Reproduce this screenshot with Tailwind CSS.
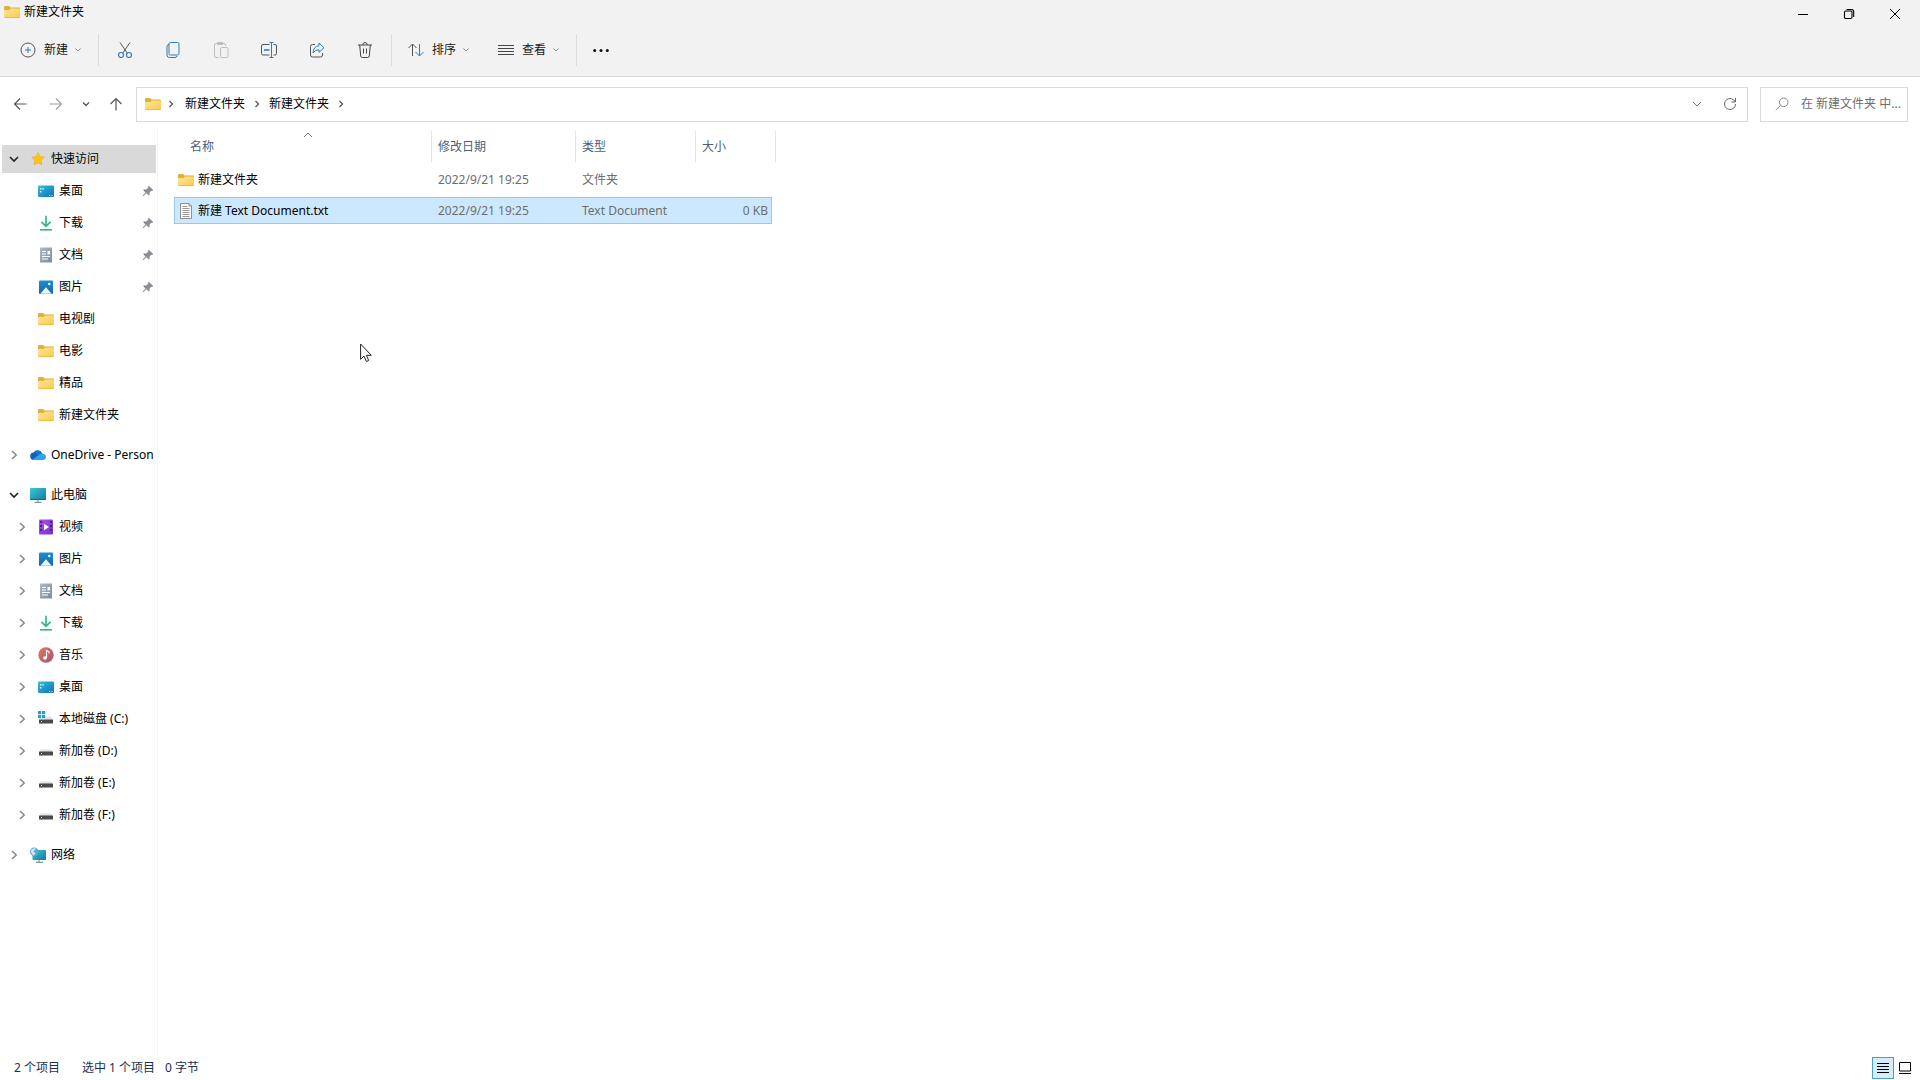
<!DOCTYPE html>
<html lang="zh-CN">
<head>
    <meta charset="UTF-8">
    <meta name="viewport" content="width=device-width, initial-scale=1.0">
    <title>新建文件夹</title>
    <script src="https://cdn.jsdelivr.net/npm/@tailwindcss/browser@4"></script>
</head>
<body class="relative flex h-screen flex-col overflow-hidden bg-white font-['Noto_Sans','Noto_Sans_CJK_SC',sans-serif] text-xs text-black">
    <!-- Icon sprite -->
    <svg class="absolute size-0" aria-hidden="true">
        <defs>
            <linearGradient id="gFolder" x1="0" y1="0" x2="1" y2="1"><stop offset="0" stop-color="#ffe596"/><stop offset="1" stop-color="#f5cb50"/></linearGradient>
            <linearGradient id="gDesk" x1="0" y1="0" x2="1" y2="1"><stop offset="0" stop-color="#2fc0de"/><stop offset="1" stop-color="#1471b0"/></linearGradient>
            <linearGradient id="gTeal" x1="0" y1="0" x2="1" y2="1"><stop offset="0" stop-color="#38cbd6"/><stop offset="1" stop-color="#16789f"/></linearGradient>
            <linearGradient id="gDoc" x1="0" y1="0" x2="1" y2="1"><stop offset="0" stop-color="#aebac8"/><stop offset="1" stop-color="#7d8a9e"/></linearGradient>
            <linearGradient id="gPic" x1="0" y1="0" x2="0" y2="1"><stop offset="0" stop-color="#1b8fd0"/><stop offset="1" stop-color="#1468aa"/></linearGradient>
            <linearGradient id="gVideo" x1="0" y1="0" x2="1" y2="1"><stop offset="0" stop-color="#a855e6"/><stop offset="1" stop-color="#7a2fc9"/></linearGradient>
            <linearGradient id="gMusic" x1="0" y1="0" x2="1" y2="1"><stop offset="0" stop-color="#e2785a"/><stop offset="1" stop-color="#a8527c"/></linearGradient>
        </defs>
        <symbol id="folder" viewBox="0 0 16 16"><path d="M0 3.200Q0 2 1.200 2H5l1.600 1.600H15q1 0 1 1V8H0z" fill="#dfb03a"/><path d="M0 6h5.600l1.300-1.400H15q1 0 1 1v7.200q0 1.200-1.200 1.200H1.200Q0 14 0 12.800z" fill="url(#gFolder)"/><path d="M.4 13.600h15.200" stroke="#e2b23e" stroke-width=".7"/></symbol>
        <symbol id="star" viewBox="0 0 16 16"><path d="M8 1.600l1.900 4 4.400.6-3.200 3.100.8 4.500L8 11.700l-3.900 2.100.8-4.500L1.700 6.200l4.400-.6z" fill="#fcc419" stroke="#f2a90c" stroke-width=".6" stroke-linejoin="round"/></symbol>
        <symbol id="desktop" viewBox="0 0 16 16"><rect y="2.500" width="16" height="11.500" rx="1" fill="url(#gDesk)"/><path d="M2 5h1.400v1.400H2zM4.500 5h1.300v1.400H4.500zM2 8h1.400v1.400H2z" fill="#d8f7ff"/><path d="M11 12.500h1.200M13.500 12.500h1.300" stroke="#bfe6fa"/></symbol>
        <symbol id="download" viewBox="0 0 16 16"><path d="M8 .8v10M3.400 6.800L8 11.300l4.600-4.500" fill="none" stroke="#2fb98a" stroke-width="1.700"/><path d="M2 14.800h12" stroke="#2fb98a" stroke-width="1.600"/></symbol>
        <symbol id="doc" viewBox="0 0 16 16"><rect x="2" y=".5" width="12" height="15" rx=".6" fill="url(#gDoc)"/><path d="M4 4.500h4M4 7h4M4 9.500h8M4 12h6" stroke="#fff" stroke-width="1.100"/><path d="M9.500 4h2.500v3.500H9.500z" fill="#fff"/></symbol>
        <symbol id="picture" viewBox="0 0 16 16"><rect x="1" y="1.500" width="14" height="13.500" rx="1" fill="url(#gPic)"/><path d="M2.300 14.800L8 8.300l5.700 6.500z" fill="#e9f7ff"/><circle cx="11.300" cy="5" r="1.200" fill="#fff"/></symbol>
        <symbol id="onedrive" viewBox="0 0 16 16"><path d="M4 12.800a3.600 3.600 0 0 1-.4-7.200A4.700 4.700 0 0 1 12 6.200z" fill="#0f62b8"/><path d="M4.500 5.500A4.700 4.700 0 0 1 12 6.300L15 9l-5 1z" fill="#1379cf"/><path d="M2.500 12.600L9.600 7.600Q11 6.200 13 6.900a3 3 0 0 1-.2 6H3.800z" fill="#2aa5ea"/></symbol>
        <symbol id="pc" viewBox="0 0 16 16"><rect y="1" width="16" height="12" rx=".8" fill="url(#gTeal)"/><path d="M8 13v2M4.500 15.300h7" stroke="#7f97a8" stroke-width="1.200"/><path d="M.3 12.500h15.400" stroke="#126a8b"/></symbol>
        <symbol id="video" viewBox="0 0 16 16"><rect x="1" y=".5" width="14" height="15" rx="1" fill="url(#gVideo)"/><path d="M3 2v12M13 2v12" stroke="#46178a" stroke-width="1.700" stroke-dasharray="2 2"/><path d="M6 4.800l5 3.200-5 3.200z" fill="#fff"/></symbol>
        <symbol id="music" viewBox="0 0 16 16"><circle cx="8" cy="8" r="7.700" fill="url(#gMusic)"/><path d="M8.500 10.700V3.500l2.500 1.300v1.700" fill="none" stroke="#fff" stroke-width="1.200"/><circle cx="7" cy="11" r="1.800" fill="#fff"/></symbol>
        <symbol id="drive" viewBox="0 0 16 16"><path d="M3 6.500h10l2 2.500H1z" fill="#e3e3e3"/><rect x="1" y="8.500" width="14" height="4" rx=".6" fill="#4a4a4a"/><path d="M3 10.500h1" stroke="#fff" stroke-width="1.100"/></symbol>
        <symbol id="sysdrive" viewBox="0 0 16 16"><path d="M7 5.500h6l2 3H7z" fill="#e3e3e3"/><path d="M0 0h3.200v3.200H0zM4 0h3.200v3.200H4zM0 4h3.200v3.200H0zM4 4h3.200v3.200H4z" fill="#2b9fc0"/><rect x="1" y="8.500" width="14" height="4" rx=".6" fill="#4a4a4a"/><path d="M3 10.500h1" stroke="#fff" stroke-width="1.100"/></symbol>
        <symbol id="network" viewBox="0 0 16 16"><rect x="2.500" y="3" width="13.500" height="10" rx=".8" fill="url(#gTeal)"/><path d="M9 13v2M6 15.300h7" stroke="#7f97a8" stroke-width="1.200"/><circle cx="4.200" cy="4.800" r="4.200" fill="#5da9cd"/><path d="M1 3q2-2.500 5-1.500L3.500 4.500l2 2-2 2Q1 7 1 3z" fill="#cfeaf5"/></symbol>
        <symbol id="pin" viewBox="0 0 12 12"><path d="M6.800.8l4.400 4.200-1 .9-.9-.2-1.800 2 .2 2.200-.9.7-2.500-2.500L1.300 11.300l-.7-.6 2.700-3.300L1.200 5l.8-.8 2.300.2 2-1.800-.3-.9z" fill="#8a8f95"/></symbol>
        <symbol id="right" viewBox="0 0 12 12"><path d="M4 2l4.200 4L4 10" fill="none" stroke="currentColor" stroke-width="1.500"/></symbol>
        <symbol id="down" viewBox="0 0 12 12"><path d="M2 4l4 4 4-4" fill="none" stroke="currentColor" stroke-width="1.600"/></symbol>
        <symbol id="menu" viewBox="0 0 16 16"><path d="M5.500 6.500L8 9l2.500-2.500" fill="none" stroke="currentColor"/></symbol>
        <symbol id="crumb" viewBox="0 0 12 12"><path d="M4.500 3l3 3-3 3" fill="none" stroke="currentColor" stroke-width="1.300"/></symbol>
    </svg>

    <!-- Title bar and commands -->
    <header class="border-b border-[#dadada] bg-[#f2f2f2]">
        <div class="flex h-7 justify-between pr-0.5">
            <h1 class="flex h-6 items-center gap-1 pl-1">
                <svg class="size-4"><use href="#folder"/></svg>新建文件夹
            </h1>
            <div class="flex">
                <button aria-label="最小化" class="flex w-[46px] items-center justify-center"><svg class="size-3" viewBox="0 0 12 12"><path d="M1 6.500h10" stroke="#000"/></svg></button>
                <button aria-label="还原" class="flex w-[46px] items-center justify-center"><svg class="size-3" viewBox="0 0 12 12" fill="none" stroke="#000" stroke-width="1.100"><rect x="1.500" y="3" width="7.500" height="7.500" rx="1.200"/><path d="M3.500 1.500h5q2.200 0 2.200 2.200V9"/></svg></button>
                <button aria-label="关闭" class="flex w-[46px] items-center justify-center"><svg class="size-3" viewBox="0 0 12 12"><path d="M1 1l10 10M11 1L1 11" stroke="#000"/></svg></button>
            </div>
        </div>
        <div class="flex h-12 items-center pb-1 pl-5 text-[#1a1a1a]">
            <button class="flex h-8 items-center gap-2">
                <svg class="size-4" viewBox="0 0 16 16" fill="none"><circle cx="8" cy="8" r="7" stroke="#555"/><path d="M8 5v6M5 8h6" stroke="#2a7ec4"/></svg>新建
                <svg class="-ml-1.5 size-4 text-[#888]"><use href="#menu"/></svg>
            </button>
            <span class="mr-0.5 ml-3 h-8 w-px bg-[#dcdcdc]"></span>
            <button aria-label="剪切" class="flex h-8 w-12 items-center justify-center"><svg class="size-4" viewBox="0 0 16 16" fill="none"><path d="M3 .5l7.300 10.700M13 .5L5.700 11.200" stroke="#555"/><circle cx="4" cy="13" r="2.500" stroke="#2a7ec4" stroke-width="1.200"/><circle cx="12" cy="13" r="2.500" stroke="#2a7ec4" stroke-width="1.200"/></svg></button>
            <button aria-label="复制" class="flex h-8 w-12 items-center justify-center"><svg class="size-4" viewBox="0 0 16 16" fill="none"><rect x="4" y=".5" width="10" height="12.500" rx="1.500" stroke="#2a7ec4"/><path d="M4 2.500q-2 .2-2 2V13q0 2.500 2.500 2.500H10q1.600 0 2-1.500" stroke="#4f6f8c"/></svg></button>
            <button aria-label="粘贴" disabled class="flex h-8 w-12 items-center justify-center"><svg class="size-4" viewBox="0 0 16 16" fill="none" stroke="#bdbdbd"><path d="M6 15.500H3q-1.500 0-1.500-1.500V3Q1.500 1.500 3 1.500h8q1.500 0 1.500 1.500v1"/><path d="M4.500.5h5v2h-5z"/><rect x="7.500" y="5.500" width="7.500" height="10" rx="1.200"/></svg></button>
            <button aria-label="重命名" class="flex h-8 w-12 items-center justify-center"><svg class="size-4" viewBox="0 0 16 16" fill="none"><path d="M8.500 2.500H2Q.5 2.500.5 4v7.500Q.5 13 2 13h6.500M12.500 2.500h1.500q1.500 0 1.500 1.500v7.500q0 1.500-1.500 1.500h-1.500" stroke="#555"/><path d="M3 8h5.500" stroke="#2a7ec4" stroke-width="1.600"/><path d="M8.500.5h4M10.500.5v15M8.500 15.500h4" stroke="#2a7ec4"/></svg></button>
            <button aria-label="共享" class="flex h-8 w-12 items-center justify-center"><svg class="size-4" viewBox="0 0 16 16" fill="none"><path d="M6 2.500H3.500q-2 0-2 2v8.500q0 2 2 2h8q2 0 2-2v-2" stroke="#555"/><path d="M10 1l5 4.700-5 4.600V7.800Q6.500 7.500 4 11q.3-6.500 6-7.300z" stroke="#2a7ec4" stroke-linejoin="round"/></svg></button>
            <button aria-label="删除" class="flex h-8 w-12 items-center justify-center"><svg class="size-4" viewBox="0 0 16 16" fill="none" stroke="#444"><path d="M1 3h14M2.700 3l1 11q.2 1.500 1.500 1.500h5.600q1.300 0 1.500-1.500l1-11M5.800 3q0-2.500 2.200-2.500T10.200 3M6.500 6.500v5M9.500 6.500v5"/></svg></button>
            <span class="mr-4 ml-0.5 h-8 w-px bg-[#dcdcdc]"></span>
            <button class="flex h-8 items-center gap-2">
                <svg class="size-4" viewBox="0 0 16 16" fill="none"><path d="M4.500 14V2M.5 6l4-4 4 4" stroke="#555"/><path d="M11.500 2v12M7.500 10l4 4 4-4" stroke="#2a7ec4"/></svg>排序
                <svg class="-ml-1.5 size-4 text-[#888]"><use href="#menu"/></svg>
            </button>
            <button class="ml-6 flex h-8 items-center gap-2">
                <svg class="size-4" viewBox="0 0 16 16"><path d="M0 3.500h16M0 6.500h16M0 9.500h16M0 12.500h16" stroke="#444"/></svg>查看
                <svg class="-ml-1.5 size-4 text-[#888]"><use href="#menu"/></svg>
            </button>
            <span class="mr-4 ml-3 h-8 w-px bg-[#dcdcdc]"></span>
            <button aria-label="更多" class="flex h-8 items-center"><svg class="size-4" viewBox="0 0 16 16" fill="#111"><circle cx="1.700" cy="8.500" r="1.500"/><circle cx="8" cy="8.500" r="1.500"/><circle cx="14.300" cy="8.500" r="1.500"/></svg></button>
        </div>
    </header>

    <!-- Address row -->
    <div class="flex h-[50px] items-center px-3 pt-1">
        <button aria-label="后退" class="mr-5"><svg class="size-4" viewBox="0 0 16 16" fill="none" stroke="#555" stroke-width="1.200"><path d="M14.500 8h-12M8 2.500L2.500 8 8 13.500"/></svg></button>
        <button aria-label="前进" class="mr-4"><svg class="size-4" viewBox="0 0 16 16" fill="none" stroke="#a0a0a0" stroke-width="1.200"><path d="M1.500 8h12M8 2.500L13.500 8 8 13.500"/></svg></button>
        <button aria-label="最近浏览的位置" class="mr-4"><svg class="size-3 text-[#555]" viewBox="0 0 12 12"><path d="M3 4.500l3 3 3-3" fill="none" stroke="currentColor" stroke-width="1.300"/></svg></button>
        <button aria-label="上移" class="mr-3"><svg class="size-4" viewBox="0 0 16 16" fill="none" stroke="#555" stroke-width="1.200"><path d="M8 14.500v-12M2.500 8L8 2.500 13.500 8"/></svg></button>
        <nav class="flex h-[35px] flex-1 items-center border border-[#d9d9d9] pl-2">
            <svg class="mr-1 size-4"><use href="#folder"/></svg>
            <svg class="mr-2 size-3 text-[#555]"><use href="#crumb"/></svg>
            <a href="#">新建文件夹</a>
            <svg class="mx-1.5 size-3 text-[#555]"><use href="#crumb"/></svg>
            <a href="#">新建文件夹</a>
            <svg class="mx-1.5 size-3 text-[#555]"><use href="#crumb"/></svg>
            <button aria-label="以前的位置" class="mr-5 ml-auto"><svg class="size-3" viewBox="0 0 12 12"><path d="M2 4l4 4 4-4" fill="none" stroke="#777"/></svg></button>
            <button aria-label="刷新" class="mr-2.5"><svg class="size-3.5" viewBox="0 0 14 14" fill="none" stroke="#666"><path d="M12.500 7a5.500 5.500 0 1 1-2-4.200L12.500 5M12.500 1v4h-4"/></svg></button>
        </nav>
        <label class="ml-3 flex h-[35px] w-[148px] items-center gap-3 border border-[#d9d9d9] pl-3.5">
            <svg class="size-3.5 shrink-0" viewBox="0 0 14 14" fill="none" stroke="#888"><circle cx="8.700" cy="5.300" r="4.300"/><path d="M5.600 8.400L.8 13"/></svg>
            <input type="text" aria-label="搜索" placeholder="在 新建文件夹 中..." class="w-full min-w-0 outline-none placeholder:text-[#6d6d6d]">
        </label>
    </div>

    <div class="flex min-h-0 flex-1">
        <!-- Navigation pane -->
        <aside class="w-[158px] shrink-0 border-r border-[#f5f5f5] pt-[18px] pr-px pl-0.5">
            <ul id="tree"></ul>
        </aside>

        <!-- File list -->
        <main class="flex-1 pl-4">
            <table class="w-[602px] table-fixed border-separate border-spacing-x-0 border-spacing-y-1 text-left">
                <colgroup>
                    <col class="w-[258px]"><col class="w-[144px]"><col class="w-[120px]"><col class="w-[76px]"><col class="w-1">
                </colgroup>
                <thead class="text-[#4c607a]">
                    <tr class="h-[31px]">
                        <th class="relative border-r border-[#e5e5e5] pl-4 font-normal">名称
                            <svg class="absolute top-0 left-32 size-3" viewBox="0 0 12 12"><path d="M2 6l4-4 4 4" fill="none" stroke="#777"/></svg>
                        </th>
                        <th class="border-r border-[#e5e5e5] pl-1.5 font-normal">修改日期</th>
                        <th class="border-r border-[#e5e5e5] pl-1.5 font-normal">类型</th>
                        <th class="pl-1.5 font-normal">大小</th>
                        <td class="border-r border-[#e5e5e5]"></td>
                    </tr>
                </thead>
                <tbody class="text-[#6d6d6d]">
                    <tr class="h-[27px]">
                        <td class="pl-1 text-black"><a href="#" class="flex items-center gap-1"><svg class="size-4"><use href="#folder"/></svg>新建文件夹</a></td>
                        <td class="pl-1.5">2022/9/21 19:25</td>
                        <td class="pl-1.5">文件夹</td>
                        <td></td>
                        <td></td>
                    </tr>
                    <tr class="h-[27px]">
                        <td class="border-y border-l border-[#99c9ea] bg-[#cce8ff] pl-[3px] text-black">
                            <a href="#" class="flex items-center gap-1">
                                <svg class="size-4" viewBox="0 0 16 16"><path d="M2.500.5h8.500l2.500 2.500v12.500h-11z" fill="#fafafa" stroke="#8e8e8e"/><path d="M11 .5V3h2.500" fill="none" stroke="#8e8e8e"/><path d="M4.500 3.500h5M4.500 5.500h7M4.500 7.500h7M4.500 9.500h7M4.500 11.500h7M4.500 13.500h7" stroke="#9a9a9a"/></svg>新建 Text Document.txt
                            </a>
                        </td>
                        <td class="border-y border-[#99c9ea] bg-[#cce8ff] pl-1.5">2022/9/21 19:25</td>
                        <td class="border-y border-[#99c9ea] bg-[#cce8ff] pl-1.5">Text Document</td>
                        <td class="border-y border-r border-[#99c9ea] bg-[#cce8ff] pr-[3px] text-right">0 KB</td>
                        <td></td>
                    </tr>
                </tbody>
            </table>
        </main>
    </div>

    <!-- Status bar -->
    <footer class="flex h-6 items-center pr-2 pl-3.5 text-[#1e3050]">
        <span class="mr-[22px]">2 个项目</span>
        <span class="mr-2.5">选中 1 个项目</span>
        <span>0 字节</span>
        <button aria-label="详细信息" class="ml-auto flex size-[22px] items-center justify-center border border-[#4ba0bd] bg-[#d3eef8]"><svg class="size-3" viewBox="0 0 12 12"><path d="M0 1.500h12M0 4.500h12M0 7.500h12M0 10.500h12" stroke="#000"/></svg></button>
        <button aria-label="大缩略图" class="ml-1 flex h-[22px] w-3.5 items-center justify-center"><svg class="size-3 shrink-0" viewBox="0 0 12 12"><path d="M.5.5h11v8.500H.5zM0 11.500h12" fill="none" stroke="#000"/></svg></button>
    </footer>

    <!-- Pointer -->
    <svg class="pointer-events-none absolute top-[343px] left-[360px] h-5 w-3" viewBox="0 0 12 20"><path d="M.6 1v15.300l3.400-3.200 2.400 5.400 2.300-1-2.300-5.200h4.900z" fill="#fff" stroke="#222"/></svg>

    <script>
        const groups = [
            [
                { name: '快速访问', icon: 'star', state: 'down', root: true, active: true },
                { name: '桌面', icon: 'desktop', pinned: true },
                { name: '下载', icon: 'download', pinned: true },
                { name: '文档', icon: 'doc', pinned: true },
                { name: '图片', icon: 'picture', pinned: true },
                { name: '电视剧', icon: 'folder' },
                { name: '电影', icon: 'folder' },
                { name: '精品', icon: 'folder' },
                { name: '新建文件夹', icon: 'folder' },
            ],
            [
                { name: 'OneDrive - Person', icon: 'onedrive', state: 'right', root: true },
            ],
            [
                { name: '此电脑', icon: 'pc', state: 'down', root: true },
                { name: '视频', icon: 'video', state: 'right' },
                { name: '图片', icon: 'picture', state: 'right' },
                { name: '文档', icon: 'doc', state: 'right' },
                { name: '下载', icon: 'download', state: 'right' },
                { name: '音乐', icon: 'music', state: 'right' },
                { name: '桌面', icon: 'desktop', state: 'right' },
                { name: '本地磁盘 (C:)', icon: 'sysdrive', state: 'right' },
                { name: '新加卷 (D:)', icon: 'drive', state: 'right' },
                { name: '新加卷 (E:)', icon: 'drive', state: 'right' },
                { name: '新加卷 (F:)', icon: 'drive', state: 'right' },
            ],
            [
                { name: '网络', icon: 'network', state: 'right', root: true },
            ],
        ];

        const expander = item => item.state
            ? `<button aria-label="${item.name}" class="size-3 shrink-0 ${item.state === 'down' ? 'text-[#222]' : 'text-[#888]'}"><svg class="size-3"><use href="#${item.state}"/></svg></button>`
            : '<span class="size-3 shrink-0"></span>';

        document.getElementById('tree').innerHTML = groups.map(items => `
            <li class="mb-3">
                <ul class="flex flex-col gap-1">
                    ${items.map(item => `
                        <li class="flex h-7 items-center pr-0.5 ${item.root ? 'pl-1.5' : 'pl-3.5'} ${item.active ? 'bg-[#d9d9d9]' : ''}">
                            ${expander(item)}
                            <a href="#" class="ml-2.5 flex min-w-0 flex-1 items-center gap-[5px] whitespace-nowrap">
                                <svg class="size-4 shrink-0"><use href="#${item.icon}"/></svg>${item.name}
                            </a>
                            ${item.pinned ? '<svg class="size-3 shrink-0"><use href="#pin"/></svg>' : ''}
                        </li>
                    `).join('')}
                </ul>
            </li>
        `).join('');
    </script>
</body>
</html>
